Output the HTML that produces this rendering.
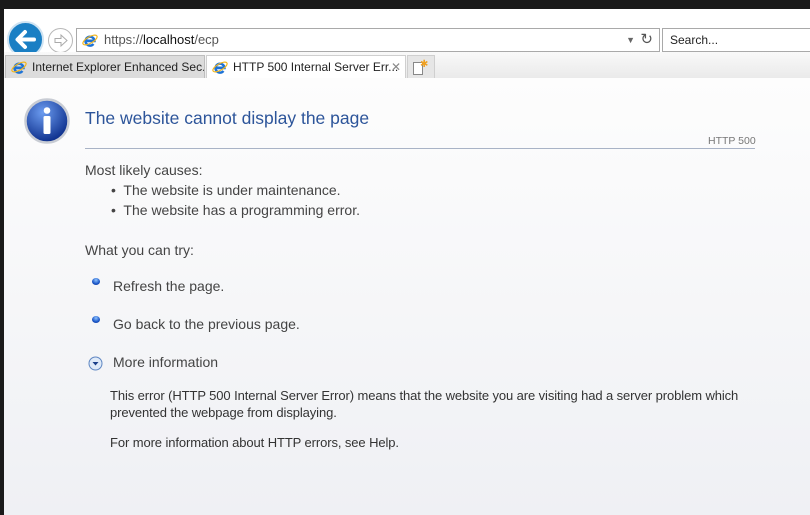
<!DOCTYPE html>
<html><head><meta charset="utf-8"><style>
*{margin:0;padding:0;box-sizing:border-box}
body{width:810px;height:515px;overflow:hidden;background:#1a1a1a;font-family:"Liberation Sans",sans-serif;position:relative}
.win{position:absolute;left:4px;top:9px;right:0;bottom:0;background:#fff}
.tool{position:absolute;left:0;top:0;right:0;height:43px;background:#fff}
.back{position:absolute;left:3px;top:12px;width:37px;height:37px;border-radius:50%;background:#1a7fc4;border:2px solid #cfe3f2}
.fwd{position:absolute;left:44px;top:19px;width:25px;height:25px;border-radius:50%;border:1px solid #b8b8b8;background:#fff}
.addr{position:absolute;left:72px;top:19px;width:584px;height:24px;border:1px solid #a9a9a9;background:#fff;font-size:13px;color:#555;line-height:22px;padding-left:27px}
.addr b{font-weight:normal;color:#111}
.search{position:absolute;left:658px;top:19px;width:160px;height:24px;border:1px solid #a9a9a9;font-size:12px;line-height:22px;padding-left:7px;color:#222}
.tabs{position:absolute;left:0;top:43px;right:0;height:26px;background:linear-gradient(#f9f9f9,#eaeaea)}
.tab{position:absolute;top:3px;height:23px;font-size:12px;line-height:22px;color:#222;padding-left:26px;white-space:nowrap;overflow:hidden}
.t1{left:1px;width:200px;background:#dcdcdc;border:1px solid #bdbdbd;border-bottom:none}
.t2{left:202px;width:200px;background:#fff;border:1px solid #cfcfcf;border-bottom:none}
.t3{left:403px;width:22px;background:#e6e6e6;border:1px solid #cfcfcf;border-bottom:none}
.ie{position:absolute;left:5px;top:3px;width:16px;height:16px}
.page{position:absolute;left:0;top:69px;right:0;bottom:0;background:linear-gradient(#fdfdfd,#eff0f4)}
.h1{position:absolute;left:81px;top:30px;font-size:17.5px;color:#2d559a}
.rule{position:absolute;left:81px;top:70px;width:670px;border-top:1px solid #a9b3c6}
.code{position:absolute;left:704px;top:57px;font-size:10.5px;color:#777}
.txt{position:absolute;color:#444;font-size:14px;white-space:nowrap}
.sm{font-size:13px;color:#333;letter-spacing:-0.1px}
.dot{position:absolute;width:8px;height:7px;border-radius:50%;background:radial-gradient(circle at 50% 30%,#8fc4ff,#1a56c8 60%,#0b2f88)}
</style></head><body>
<div class="win">
 <div class="tool">
  <div class="back"><svg width="33" height="33" viewBox="0 0 33 33"><path d="M25 16.5H9M16 9l-7.5 7.5L16 24" stroke="#fff" stroke-width="4" fill="none" stroke-linecap="round" stroke-linejoin="round"/></svg></div>
  <div class="fwd"><svg width="23" height="23" viewBox="0 0 23 23"><path d="M6 9.5h6V6l6 5.5-6 5.5v-3.5H6z" stroke="#aaa" fill="none"/></svg></div>
  <div class="addr"><svg class="ie" style="left:5px;top:3px" viewBox="0 0 16 16"><path d="M3.5 9h9a4.5 4.5 0 1 0-1 3" fill="none" stroke="#1e73d6" stroke-width="2.4"/><path d="M4 8.5h8" stroke="#1e73d6" stroke-width="2"/><ellipse cx="8" cy="8" rx="8" ry="3.2" transform="rotate(-30 8 8)" fill="none" stroke="#f2b51c" stroke-width="1.2"/></svg>https://<b>localhost</b>/ecp<span style="position:absolute;right:24px;top:0;font-size:9px;color:#666">▼</span><span style="position:absolute;right:6px;top:0;font-size:15px;color:#555">↻</span></div>
  <div class="search">Search...</div>
 </div>
 <div class="tabs">
  <div class="tab t1"><svg class="ie" viewBox="0 0 16 16"><path d="M3.5 9h9a4.5 4.5 0 1 0-1 3" fill="none" stroke="#1e73d6" stroke-width="2.4"/><path d="M4 8.5h8" stroke="#1e73d6" stroke-width="2"/><ellipse cx="8" cy="8" rx="8" ry="3.2" transform="rotate(-30 8 8)" fill="none" stroke="#f2b51c" stroke-width="1.2"/></svg>Internet Explorer Enhanced Sec...</div>
  <div class="tab t2"><svg class="ie" viewBox="0 0 16 16"><path d="M3.5 9h9a4.5 4.5 0 1 0-1 3" fill="none" stroke="#1e73d6" stroke-width="2.4"/><path d="M4 8.5h8" stroke="#1e73d6" stroke-width="2"/><ellipse cx="8" cy="8" rx="8" ry="3.2" transform="rotate(-30 8 8)" fill="none" stroke="#f2b51c" stroke-width="1.2"/></svg>HTTP 500 Internal Server Err...<span style="position:absolute;right:4px;color:#888">✕</span></div>
  <div class="tab t3"><svg style="position:absolute;left:4px;top:3px" width="16" height="17" viewBox="0 0 16 17"><path d="M1.5 3.5h9v12h-9z" fill="#fff" stroke="#888"/><text x="8" y="8" font-size="10" fill="#f0a020">✱</text></svg></div>
 </div>
 <div class="page">
  <svg style="position:absolute;left:20px;top:20px" width="46" height="46" viewBox="0 0 46 46"><defs><radialGradient id="g" cx="40%" cy="30%" r="70%"><stop offset="0" stop-color="#6c9cf0"/><stop offset="1" stop-color="#0d2f8c"/></radialGradient></defs><circle cx="23" cy="23" r="21.5" fill="url(#g)" stroke="#c8ccd4" stroke-width="2.5"/><circle cx="23" cy="12.5" r="3.3" fill="#fff"/><rect x="19.5" y="18" width="7" height="18" rx="1.5" fill="#fff"/></svg>
  <div class="h1">The website cannot display the page</div>
  <div class="code">HTTP 500</div>
  <div class="rule"></div>
  <div class="txt" style="left:81px;top:84px">Most likely causes:</div>
  <div class="txt" style="left:107px;top:104px">•&nbsp; The website is under maintenance.</div>
  <div class="txt" style="left:107px;top:124px">•&nbsp; The website has a programming error.</div>
  <div class="txt" style="left:81px;top:164px">What you can try:</div>
  <div class="dot" style="left:88px;top:200px"></div>
  <div class="txt" style="left:109px;top:200px">Refresh the page.</div>
  <div class="dot" style="left:88px;top:238px"></div>
  <div class="txt" style="left:109px;top:238px">Go back to the previous page.</div>
  <svg style="position:absolute;left:84px;top:278px" width="15" height="15" viewBox="0 0 15 15"><circle cx="7.5" cy="7.5" r="6.5" fill="#dfeaf8" stroke="#5f86c2"/><path d="M4.5 6h6l-3 3.5z" fill="#1b3f8a"/></svg>
  <div class="txt" style="left:109px;top:276px">More information</div>
  <div class="txt sm" style="left:106px;top:310px">This error (HTTP 500 Internal Server Error) means that the website you are visiting had a server problem which</div>
  <div class="txt sm" style="left:106px;top:327px">prevented the webpage from displaying.</div>
  <div class="txt sm" style="left:106px;top:357px">For more information about HTTP errors, see Help.</div>
 </div>
</div>
</body></html>
